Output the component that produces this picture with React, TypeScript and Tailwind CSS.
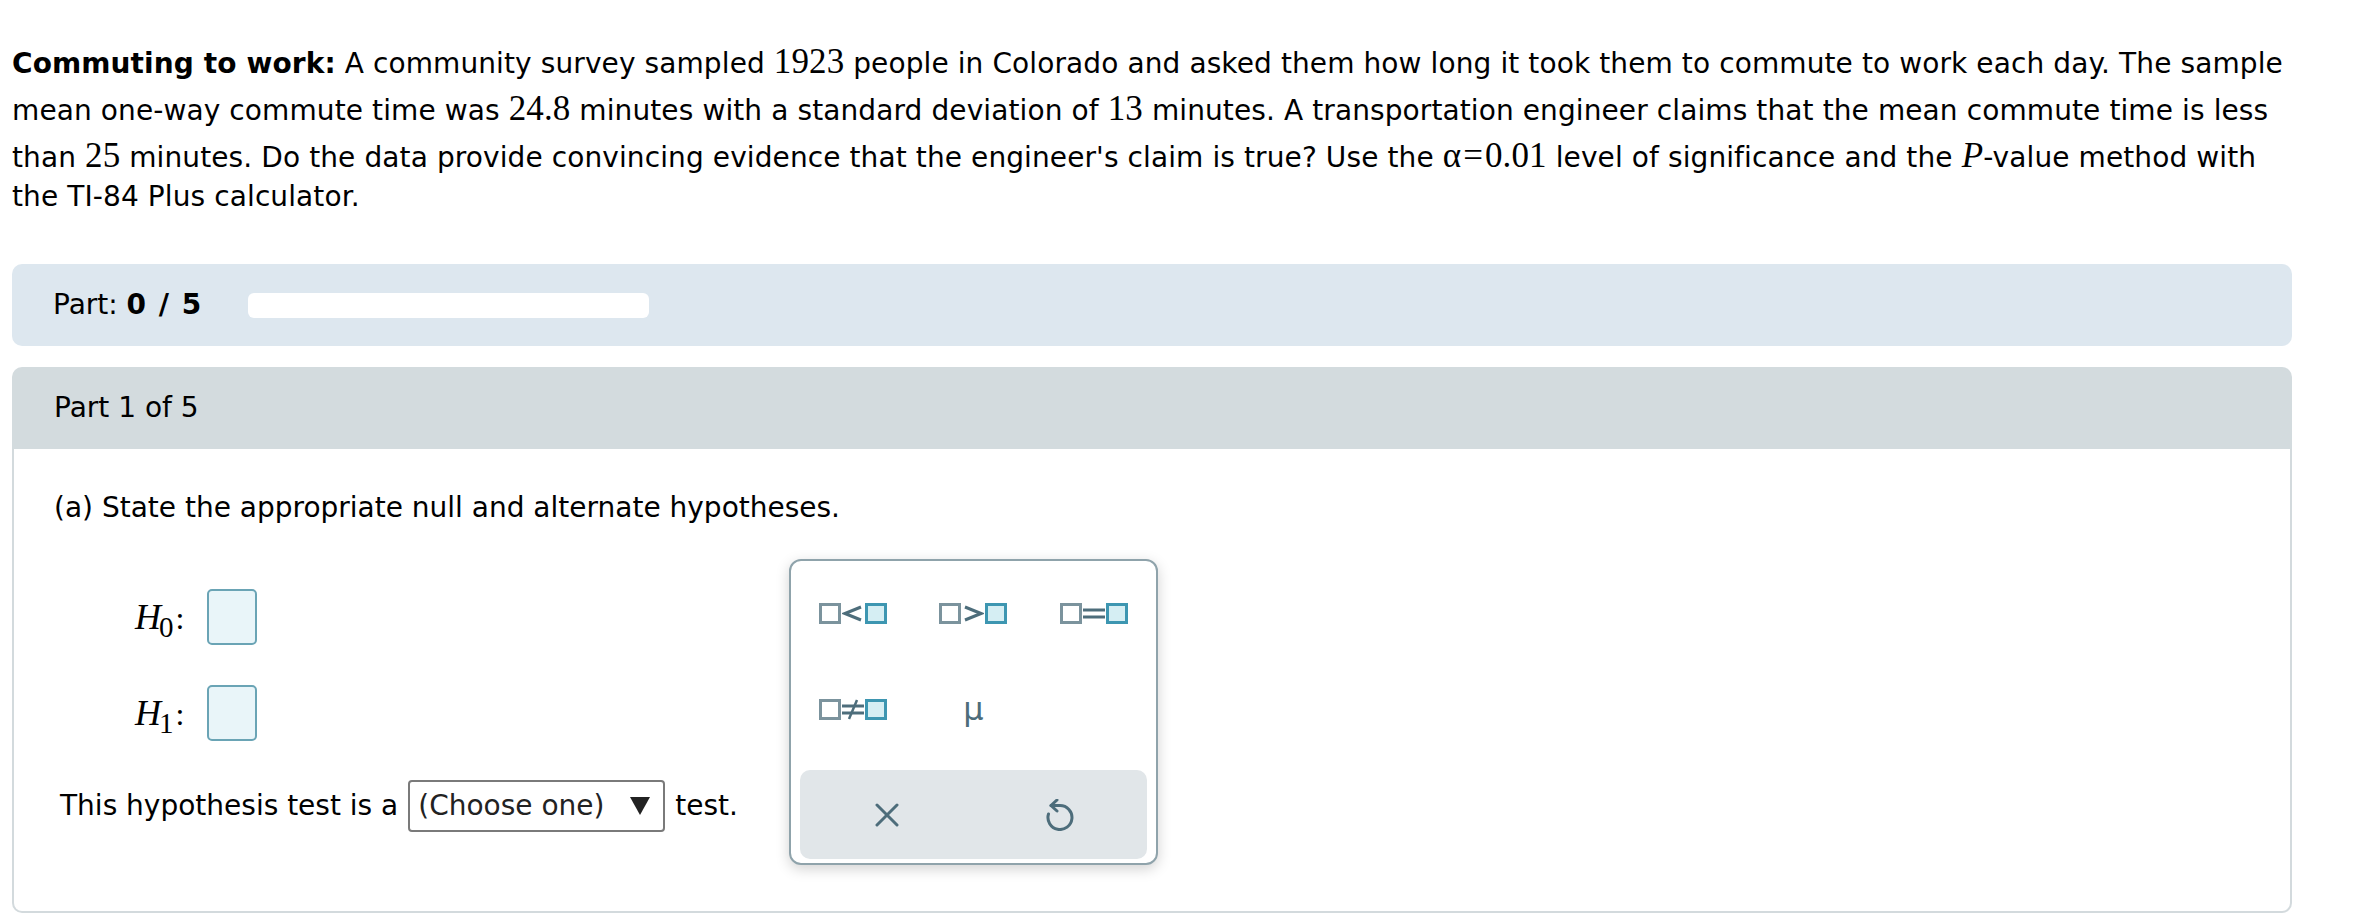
import React from "react";

const Num = ({ children }: { children: React.ReactNode }) => (
  <span className="font-['Liberation_Serif',serif] text-[35px] leading-none">{children}</span>
);

const SqOut = () => (
  <span className="inline-block w-[22px] h-[21px] border-[3px] border-[#7b939d] bg-white" />
);
const SqIn = () => (
  <span className="inline-block w-[22px] h-[21px] border-[3px] border-[#3d96b1] bg-[#d5eef3]" />
);

const Rel = ({ kind }: { kind: "lt" | "gt" | "eq" | "ne" }) => (
  <svg width="22" height="22" viewBox="0 0 22 22" className="mx-[1px]">
    {kind === "lt" && (
      <polyline points="19,5 3,11.5 19,18" fill="none" stroke="#4d6d7b" strokeWidth="3" strokeLinejoin="miter" />
    )}
    {kind === "gt" && (
      <polyline points="3,5 19,11.5 3,18" fill="none" stroke="#4d6d7b" strokeWidth="3" strokeLinejoin="miter" />
    )}
    {(kind === "eq" || kind === "ne") && (
      <g stroke="#4d6d7b" strokeWidth="3">
        <line x1="0" y1="8" x2="22" y2="8" />
        <line x1="0" y1="15" x2="22" y2="15" />
        {kind === "ne" && <line x1="15" y1="2" x2="7" y2="21" strokeWidth="2.5" />}
      </g>
    )}
  </svg>
);

const Sym = ({ kind }: { kind: "lt" | "gt" | "eq" | "ne" }) => (
  <div className="flex items-center justify-center">
    <SqOut />
    <Rel kind={kind} />
    <SqIn />
  </div>
);

const Hyp = ({ sub }: { sub: string }) => (
  <div className="flex items-center h-[56px] pl-[121px]">
    <div className="w-[72px] flex items-baseline font-['Liberation_Serif',serif] text-black">
      <span className="italic text-[36px] leading-none">H</span>
      <span className="text-[29px] leading-none relative top-[8px] -ml-[2px]">{sub}</span>
      <span className="text-[32px] leading-none ml-[2px]">:</span>
    </div>
    <div className="w-[50px] h-[56px] rounded-[5px] border-2 border-[#6aa4b5] bg-[#e9f5f9]" />
  </div>
);

export default function App() {
  return (
    <div className="w-[2356px] min-h-[924px] bg-white font-['DejaVu_Sans',Verdana,sans-serif] text-[28px] text-black pl-[12px] pr-[64px]">
      <div className="pt-[40px] whitespace-nowrap tracking-[0.1px]">
        <div className="h-[47px] leading-[47px]">
          <b>Commuting to work:</b> A community survey sampled <Num>1923</Num> people in Colorado and asked them how long it took them to commute to work each day. The sample
        </div>
        <div className="h-[47px] leading-[47px]">
          mean one-way commute time was <Num>24.8</Num> minutes with a standard deviation of <Num>13</Num> minutes. A transportation engineer claims that the mean commute time is less
        </div>
        <div className="h-[47px] leading-[47px]">
          than <Num>25</Num> minutes. Do the data provide convincing evidence that the engineer's claim is true? Use the{" "}
          <Num>
            α<span className="mx-[2px]">=</span>0.01
          </Num>{" "}
          level of significance and the{" "}
          <span className="font-['Liberation_Serif',serif] italic text-[35px] leading-none">P</span>-value method with
        </div>
        <div className="h-[32px] leading-[32px]">the TI-84 Plus calculator.</div>
      </div>

      <div className="mt-[51px] h-[82px] rounded-[10px] bg-[#dde7ef] flex items-center pl-[41px]">
        <span className="w-[195px]">
          Part: <b className="tracking-[1.5px]">0 / 5</b>
        </span>
        <div className="w-[401px] h-[25px] rounded-[6px] bg-white" />
      </div>

      <div className="mt-[21px] h-[82px] rounded-t-[10px] bg-[#d3dbde] flex items-center pl-[42px]">
        Part 1 of 5
      </div>

      <div className="relative h-[464px] border-2 border-t-0 border-[#d3dadd] rounded-b-[10px]">
        <div className="pl-[40px] pt-[41px] leading-[36px]">(a) State the appropriate null and alternate hypotheses.</div>

        <div className="mt-[63px]">
          <Hyp sub="0" />
        </div>
        <div className="mt-[40px]">
          <Hyp sub="1" />
        </div>

        <div className="mt-[40px] h-[50px] flex items-center pl-[46px]">
          <span>This hypothesis test is a</span>
          <div className="ml-[10px] w-[257px] h-[52px] border-2 border-[#7a7a7a] rounded-[4px] flex items-center pl-[8px] text-[#222]">
            <span>(Choose one)</span>
            <svg width="20" height="18" viewBox="0 0 20 18" className="ml-[26px]">
              <polygon points="0,0 20,0 10,18" fill="#222" />
            </svg>
          </div>
          <span className="ml-[10px]">test.</span>
        </div>

        <div className="absolute left-[775px] top-[110px] w-[369px] h-[306px] rounded-[12px] border-2 border-[#8fa3ab] bg-white shadow-[0_4px_14px_rgba(0,0,0,0.18)] flex flex-col">
          <div className="pt-[4px] px-[2px] grid grid-cols-3">
            <div className="h-[96px] flex items-center justify-center">
              <Sym kind="lt" />
            </div>
            <div className="h-[96px] flex items-center justify-center">
              <Sym kind="gt" />
            </div>
            <div className="h-[96px] flex items-center justify-center">
              <Sym kind="eq" />
            </div>
            <div className="h-[96px] flex items-center justify-center">
              <Sym kind="ne" />
            </div>
            <div className="h-[96px] flex items-center justify-center text-[32px] text-[#4d6d7b] leading-none">
              μ
            </div>
            <div className="h-[96px]" />
          </div>
          <div className="mt-[13px] mx-[9px] h-[89px] rounded-[10px] bg-[#e1e6e9] grid grid-cols-2">
            <div className="flex items-center justify-center">
              <svg width="24" height="24" viewBox="0 0 24 24">
                <g stroke="#4d6d7b" strokeWidth="3" strokeLinecap="round">
                  <line x1="2" y1="2" x2="22" y2="22" />
                  <line x1="22" y1="2" x2="2" y2="22" />
                </g>
              </svg>
            </div>
            <div className="flex items-center justify-center">
              <svg width="32" height="32" viewBox="0 0 32 32">
                <g fill="none" stroke="#4d6d7b" strokeWidth="3" strokeLinecap="round" strokeLinejoin="round">
                  <polyline points="13,1 7,6.5 13,12" />
                  <path d="M7 6.5 H16 A12 12 0 1 1 4.5 15" />
                </g>
              </svg>
            </div>
          </div>
        </div>
      </div>
    </div>
  );
}
